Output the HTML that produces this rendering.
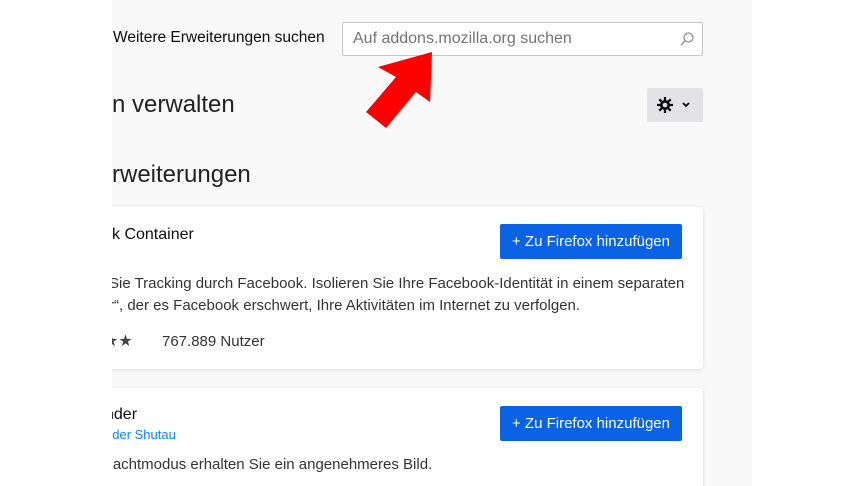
<!DOCTYPE html>
<html><head><meta charset="utf-8"><style>
*{margin:0;padding:0;box-sizing:border-box}
body{width:864px;height:486px;background:#fff;position:relative;overflow:hidden;font-family:"Liberation Sans",sans-serif;color:#0c0c0d}
#main{position:absolute;left:112px;top:0;width:640px;height:486px;background:#f9f9fa;overflow:hidden}
.a{position:absolute;white-space:nowrap}
.card{position:absolute;left:-20px;width:611px;background:#fff;border-radius:4px;box-shadow:0 1px 4px rgba(12,12,13,.12)}
.btn{position:absolute;left:408px;width:182px;height:35px;background:#0a63e3;color:#fff;border-radius:2px;font-size:15px;line-height:35px;text-align:center}
</style></head><body>
<div id="main">
<div class="a" style="left:1px;top:29px;font-size:15.5px">Weitere Erweiterungen suchen</div>
<div class="a" style="left:230px;top:22px;width:361px;height:34px;background:#fff;border:1px solid #c8c8cc;border-radius:2px">
 <div class="a" style="left:10px;top:7px;font-size:16px;color:#737373">Auf addons.mozilla.org suchen</div>
 <svg class="a" style="left:336px;top:8px" width="16" height="16" viewBox="0 0 16 16"><circle cx="9.5" cy="6.5" r="4.5" fill="none" stroke="#888" stroke-width="1.2"/><path d="M6.3 9.7L2 14" stroke="#888" stroke-width="1.3"/></svg>
</div>
<div class="a" style="left:0;top:91px;font-size:24px;font-weight:300;color:#222">n verwalten</div>
<div class="a" style="left:535px;top:88px;width:56px;height:34px;background:#e3e3e5;border-radius:2px">
 <svg class="a" style="left:9px;top:8px" width="18" height="18" viewBox="0 0 18 18"><g stroke="#0c0c0d" stroke-width="2.2"><path d="M9 1v16M1 9h16M3.3 3.3l11.4 11.4M14.7 3.3L3.3 14.7"/></g><circle cx="9" cy="9" r="5" fill="#0c0c0d"/><circle cx="9" cy="9" r="2.3" fill="#e3e3e5"/></svg>
 <svg class="a" style="left:34px;top:13px" width="10" height="8" viewBox="0 0 10 8"><path d="M2 2l3 3 3-3" fill="none" stroke="#0c0c0d" stroke-width="1.8"/></svg>
</div>
<div class="a" style="left:-16px;top:161px;font-size:24px;font-weight:300;color:#222">Erweiterungen</div>
<div class="card" style="top:207px;height:162px">
 <div class="a" style="left:20px;top:19px;font-size:16px">k Container</div>
 <div class="btn" style="top:17px">+ Zu Firefox hinzufügen</div>
 <div class="a" style="left:17px;top:68px;font-size:15px;color:#333">Sie Tracking durch Facebook. Isolieren Sie Ihre Facebook-Identität in einem separaten</div>
 <div class="a" style="left:17px;top:90px;font-size:15px;color:#333">r“, der es Facebook erschwert, Ihre Aktivitäten im Internet zu verfolgen.</div>
 <div class="a" style="left:12px;top:124px;font-size:16px;color:#444">★★</div>
 <div class="a" style="left:70px;top:126px;font-size:15px;color:#333">767.889 Nutzer</div>
</div>
<div class="card" style="top:388px;height:120px">
 <div class="a" style="left:13px;top:18px;font-size:16px">nder</div>
 <div class="a" style="left:13px;top:39px;font-size:13px;color:#0a84ff">nder Shutau</div>
 <div class="btn" style="top:18px">+ Zu Firefox hinzufügen</div>
 <div class="a" style="left:10px;top:68px;font-size:15px;color:#333">Nachtmodus erhalten Sie ein angenehmeres Bild.</div>
</div>
</div>
<svg class="a" style="left:0;top:0" width="864" height="486"><polygon points="432,52 430,102 416,92 386,128 366,112 396,77 378,67" fill="#f00"/></svg>
</body></html>
